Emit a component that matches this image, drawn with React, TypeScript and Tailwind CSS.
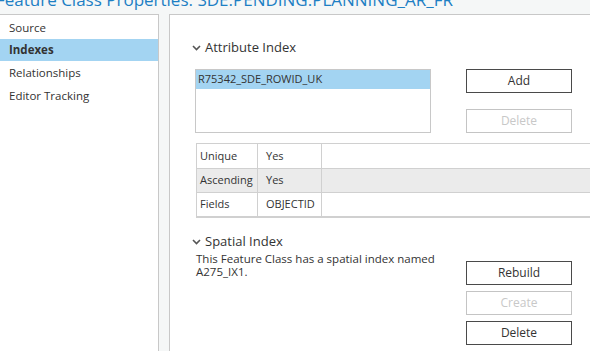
import React from "react";

// Small chevron used by the collapsible section headers
const Chevron: React.FC = () => (
  <svg width="9" height="6" viewBox="0 0 9 6" className="shrink-0">
    <path d="M1 1l3.5 3.5L8 1" fill="none" stroke="#555" strokeWidth="1.6" />
  </svg>
);

const Btn: React.FC<{ label: string; disabled?: boolean }> = ({ label, disabled }) => (
  <button
    disabled={disabled}
    className={`w-[106px] h-[24px] flex items-center justify-center bg-white border text-[12px] ${
      disabled ? "border-[#c4c4c4] text-[#c8c8c8]" : "border-[#4a4a4a] text-[#333]"
    }`}
  >
    {label}
  </button>
);

const navItems = ["Source", "Indexes", "Relationships", "Editor Tracking"];

const rows = [
  { k: "Unique", v: "Yes", shade: false },
  { k: "Ascending", v: "Yes", shade: true },
  { k: "Fields", v: "OBJECTID", shade: false },
];

export default function App() {
  return (
    <div
      className="w-[590px] h-[351px] overflow-hidden bg-[#f5f7f7] flex flex-col text-[#333]"
      style={{ fontFamily: '"Segoe UI", "Open Sans", "Noto Sans", sans-serif' }}
    >
      {/* title strip, cut off at the top */}
      <div className="h-[14px] relative overflow-hidden shrink-0">
        <div className="absolute left-[-4px] top-[-11px] text-[17px] leading-[22px] text-[#1d7fc4] whitespace-nowrap">
          Feature Class Properties: SDE.PENDING.PLANNING_AR_FR
        </div>
      </div>

      <div className="flex flex-1 min-h-0 gap-[10px]">
        {/* sidebar */}
        <div className="w-[159px] shrink-0 bg-white border-t border-r border-[#c8c8c8] pt-px">
          {navItems.map((item) => (
            <div
              key={item}
              className={`h-[22.7px] flex items-center pl-[9px] text-[11.5px] ${
                item === "Indexes" ? "bg-[#a3d4f2] font-bold" : ""
              }`}
            >
              {item}
            </div>
          ))}
        </div>

        {/* content */}
        <div className="flex-1 bg-white border-t border-l border-[#c8c8c8] pl-[22px] pt-[24px]">
          <div className="flex items-center gap-[3px] h-[18px]">
            <Chevron />
            <span className="text-[13px] ml-[1px]">Attribute Index</span>
          </div>

          <div className="flex mt-[12px] ml-[3px]">
            <div className="w-[236px] h-[64px] border border-[#c8c8c8] bg-white">
              <div className="h-[19px] bg-[#a3d4f2] flex items-center pl-[2px] text-[11px]">
                R75342_SDE_ROWID_UK
              </div>
            </div>
            <div className="ml-[35px] flex flex-col gap-[16px]">
              <Btn label="Add" />
              <Btn label="Delete" disabled />
            </div>
          </div>

          <div className="mt-[10px] ml-[4px] border border-[#d0d0d0] border-b-2 border-r-0">
            {rows.map((r, i) => (
              <div
                key={r.k}
                className={`flex h-[24px] text-[11px] ${r.shade ? "bg-[#ebebeb]" : ""} ${
                  i > 0 ? "border-t border-[#d0d0d0]" : ""
                }`}
              >
                <div className="w-[61px] border-r border-[#d0d0d0] flex items-center pl-[3px]">{r.k}</div>
                <div className="w-[64px] border-r border-[#d0d0d0] flex items-center pl-[8px]">{r.v}</div>
                <div className="flex-1" />
              </div>
            ))}
          </div>

          <div className="flex items-center gap-[3px] h-[18px] mt-[15px]">
            <Chevron />
            <span className="text-[13px] ml-[1px]">Spatial Index</span>
          </div>

          <div className="flex ml-[4px]">
            <div className="w-[250px] text-[11.5px] leading-[13px] pt-[1px]">
              This Feature Class has a spatial index named A275_IX1.
            </div>
            <div className="ml-[20px] mt-[10px] flex flex-col gap-[6px]">
              <Btn label="Rebuild" />
              <Btn label="Create" disabled />
              <Btn label="Delete" />
            </div>
          </div>
        </div>
      </div>
    </div>
  );
}
